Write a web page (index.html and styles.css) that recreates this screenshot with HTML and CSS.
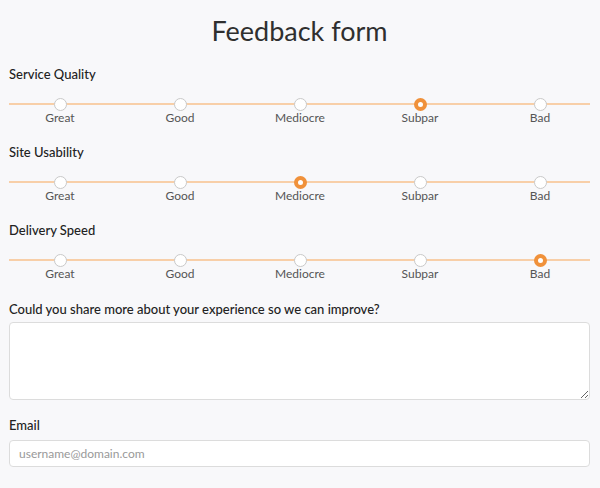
FILE: index.html
```html
<!DOCTYPE html>
<html lang="en">
<head>
  <meta charset="UTF-8" />
  <meta name="viewport" content="width=device-width, initial-scale=1" />
  <title>Feedback form</title>
  <link rel="stylesheet" href="styles.css">
</head>
<body>
  <h1>Feedback form</h1>

  <form class="feedback">
    <div class="group">
      <div class="group-label">Service Quality</div>
      <div class="scale">
        <label class="option"><input type="radio" name="service" /><span>Great</span></label>
        <label class="option"><input type="radio" name="service" /><span>Good</span></label>
        <label class="option"><input type="radio" name="service" /><span>Mediocre</span></label>
        <label class="option"><input type="radio" name="service" checked /><span>Subpar</span></label>
        <label class="option"><input type="radio" name="service" /><span>Bad</span></label>
      </div>
    </div>

    <div class="group">
      <div class="group-label">Site Usability</div>
      <div class="scale">
        <label class="option"><input type="radio" name="usability" /><span>Great</span></label>
        <label class="option"><input type="radio" name="usability" /><span>Good</span></label>
        <label class="option"><input type="radio" name="usability" checked /><span>Mediocre</span></label>
        <label class="option"><input type="radio" name="usability" /><span>Subpar</span></label>
        <label class="option"><input type="radio" name="usability" /><span>Bad</span></label>
      </div>
    </div>

    <div class="group">
      <div class="group-label">Delivery Speed</div>
      <div class="scale">
        <label class="option"><input type="radio" name="delivery" /><span>Great</span></label>
        <label class="option"><input type="radio" name="delivery" /><span>Good</span></label>
        <label class="option"><input type="radio" name="delivery" /><span>Mediocre</span></label>
        <label class="option"><input type="radio" name="delivery" /><span>Subpar</span></label>
        <label class="option"><input type="radio" name="delivery" checked /><span>Bad</span></label>
      </div>
    </div>

    <label class="field-label" for="comments">Could you share more about your experience so we can improve?</label>
    <textarea id="comments" class="comments"></textarea>

    <label class="field-label email-label" for="email">Email</label>
    <input type="email" id="email" class="email" placeholder="username@domain.com" />
  </form>
</body>
</html>
```

FILE: styles.css
```css
body {
  background: #f8f8fa;
  color: #2b2b2b;
  font-family: Lato, 'Open Sans', Arial, sans-serif;
  margin: 0;
  padding: 0 10px 0 9px;
}
h1 {
  margin: 14px 0 0 0;
  height: 34px;
  line-height: 34px;
  font-size: 27px;
  font-weight: 400;
  text-align: center;
  color: #2f2f2f;
}
.feedback {
  display: flex;
  flex-direction: column;
}
.group {
  margin-top: 17px;
}
.group + .group {
  margin-top: 19px;
}
.group-label,
.field-label {
  display: block;
  height: 18px;
  line-height: 18px;
  font-size: 13px;
  font-weight: 500;
  color: #222;
}
.scale {
  position: relative;
  display: grid;
  grid-template-columns: repeat(5, 1fr);
  margin: 15px -10px 0 -9px;
}
.scale::before {
  content: '';
  position: absolute;
  left: 9px;
  right: 10px;
  top: 5px;
  height: 2px;
  background: #f8cfa8;
}
.option {
  position: relative;
  display: flex;
  flex-direction: column;
  align-items: center;
  cursor: pointer;
}
.option input {
  appearance: none;
  -webkit-appearance: none;
  box-sizing: border-box;
  width: 13px;
  height: 13px;
  margin: -0.5px 0 -0.5px 0;
  border: 1px solid #c9c9c9;
  border-radius: 50%;
  background: #fff;
  cursor: pointer;
}
.option input:checked {
  border: 4px solid #f0913a;
}
.option span {
  height: 14px;
  line-height: 15px;
  font-size: 12px;
  color: #555;
}
.field-label {
  margin-top: 20px;
  margin-bottom: 4px;
}
.comments {
  box-sizing: border-box;
  height: 78px;
  border: 1px solid #dcdcdc;
  border-radius: 4px;
  background: #fff;
  resize: vertical;
  font-family: inherit;
}
.email-label {
  margin-top: 16px;
  margin-bottom: 6px;
}
.email {
  box-sizing: border-box;
  height: 27px;
  padding: 0 9px;
  border: 1px solid #dcdcdc;
  border-radius: 4px;
  background: #fff;
  font-family: inherit;
  font-size: 12px;
  color: #333;
  outline: none;
}
.email::placeholder {
  color: #999;
}
```
